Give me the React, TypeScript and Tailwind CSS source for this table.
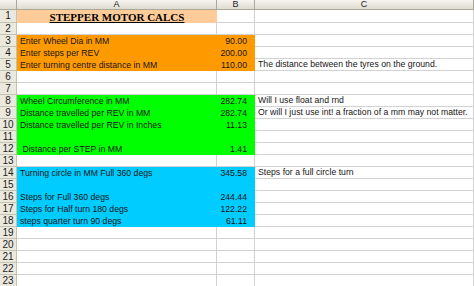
import React from 'react';

type Fill = 'none' | 'peach' | 'orange' | 'green' | 'blue';

interface SheetRow {
    n: number;
    a?: string;
    b?: string;
    c?: string;
    fill?: Fill;
    title?: boolean;
}

const rows: SheetRow[] = [
    { n: 1, a: 'STEPPER MOTOR CALCS', title: true, fill: 'peach' },
    { n: 2 },
    { n: 3, a: 'Enter Wheel Dia in MM', b: '90.00', fill: 'orange' },
    { n: 4, a: 'Enter steps per REV', b: '200.00', fill: 'orange' },
    { n: 5, a: 'Enter turning centre distance in MM', b: '110.00', c: 'The distance between the tyres on the ground.', fill: 'orange' },
    { n: 6 },
    { n: 7 },
    { n: 8, a: 'Wheel Circumference in MM', b: '282.74', c: 'Will I use float and rnd', fill: 'green' },
    { n: 9, a: 'Distance travelled per REV in MM', b: '282.74', c: 'Or will I just use int! a fraction of a mm may not matter.', fill: 'green' },
    { n: 10, a: 'Distance travelled per REV in Inches', b: '11.13', fill: 'green' },
    { n: 11, fill: 'green' },
    { n: 12, a: ' Distance per STEP in MM', b: '1.41', fill: 'green' },
    { n: 13 },
    { n: 14, a: 'Turning circle in MM Full 360 degs', b: '345.58', c: 'Steps for a full circle turn', fill: 'blue' },
    { n: 15, fill: 'blue' },
    { n: 16, a: 'Steps for Full 360 degs', b: '244.44', fill: 'blue' },
    { n: 17, a: 'Steps for Half turn 180 degs', b: '122.22', fill: 'blue' },
    { n: 18, a: 'steps quarter turn 90 degs', b: '61.11', fill: 'blue' },
    { n: 19 },
    { n: 20 },
    { n: 21 },
    { n: 22 },
    { n: 23 },
];

const fillClass: Record<Fill, string> = {
    none: 'bg-white border-r border-b border-[#d2d2d2]',
    peach: 'bg-[#ffcc99]',
    orange: 'bg-[#ff9900]',
    green: 'bg-[#00ff00]',
    blue: 'bg-[#00ccff]',
};

const plain = 'bg-white border-r border-b border-[#d2d2d2]';

const ColHeader: React.FC<{ label: string }> = ({ label }) => (
    <div className="h-[10px] flex items-center justify-center border-r border-b border-[#aca899] bg-gradient-to-b from-[#f6f5f0] to-[#dedbcf] text-[9px] leading-none text-[#222]">
        {label}
    </div>
);

const App: React.FC = () => {
    return (
        <div className="w-[474px] h-[286px] overflow-hidden bg-white font-['Liberation_Sans',Arial,sans-serif] text-[#161616]">
            <div className="grid grid-cols-[17px_200px_38px_1fr]">
                {/* Column headers */}
                <div className="h-[10px] border-r border-b border-[#aca899] bg-gradient-to-b from-[#f6f5f0] to-[#dedbcf]" />
                <ColHeader label="A" />
                <ColHeader label="B" />
                <ColHeader label="C" />

                {rows.map((r) => {
                    const fill = r.fill ?? 'none';
                    const h = r.n === 1 ? 'h-[13px]' : 'h-[12px]';
                    // Row 1 only shades column A
                    const bFill = r.title ? plain : fillClass[fill];
                    return (
                        <React.Fragment key={r.n}>
                            <div className={`${h} flex items-center justify-center bg-[#ebe9de] border-r border-b border-[#c5c2b2] text-[10px] leading-none text-[#1e1e1e]`}>
                                {r.n}
                            </div>
                            <div className={`${h} ${fillClass[fill]} flex items-end overflow-visible whitespace-pre`}>
                                {r.title ? (
                                    <span className="w-full text-center font-['Liberation_Serif','Times_New_Roman',serif] font-bold underline text-[11px] leading-[12px] text-black">
                                        {r.a}
                                    </span>
                                ) : (
                                    <span className="pl-[3px] text-[8.7px] leading-[11px]">{r.a}</span>
                                )}
                            </div>
                            <div className={`${h} ${bFill} flex items-end justify-end pr-[8px]`}>
                                <span className="text-[8.7px] leading-[11px]">{r.b}</span>
                            </div>
                            <div className={`${h} ${plain} flex items-end overflow-hidden whitespace-nowrap`}>
                                <span className="pl-[3px] text-[8.7px] leading-[11px]">{r.c}</span>
                            </div>
                        </React.Fragment>
                    );
                })}
            </div>
        </div>
    );
};

export default App;
